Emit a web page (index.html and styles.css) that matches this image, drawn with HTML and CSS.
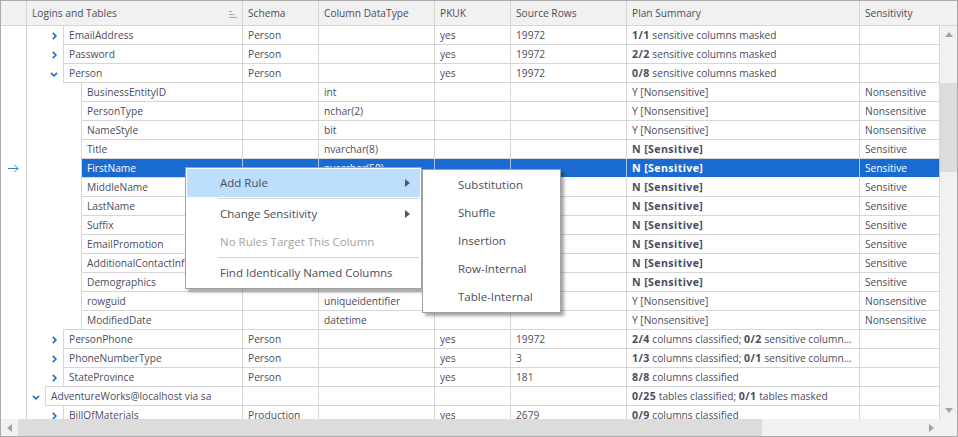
FILE: index.html
```html
<!DOCTYPE html>
<html lang="en">
<head>
<meta charset="utf-8">
<title>Logins and Tables</title>
<link rel="stylesheet" href="styles.css">
</head>
<body>
<svg class="defs" width="0" height="0" aria-hidden="true">
  <symbol id="cr" viewBox="0 0 6 9"><path d="M1 .8 4.6 4.5 1 8.2" fill="none" stroke="#1d6fd2" stroke-width="2"/></symbol>
  <symbol id="cd" viewBox="0 0 9 6"><path d="M.8 1 4.5 4.6 8.2 1" fill="none" stroke="#1d6fd2" stroke-width="2"/></symbol>
</svg>
<div class="window">
  <div class="row head">
    <div class="gutter"></div>
    <div class="cell hname">Logins and Tables
      <svg class="sort" width="8" height="7" viewBox="0 0 8 7"><path d="M0 .5h3M0 3.5h5M0 6.5h8" stroke="#a8a8a8" fill="none"/></svg>
    </div>
    <div class="cell">Schema</div><div class="cell">Column DataType</div><div class="cell">PKUK</div><div class="cell">Source Rows</div><div class="cell">Plan Summary</div><div class="cell">Sensitivity</div>
  </div>
  <div class="middle">
    <div class="rows">
      <div class="row"><div class="gutter"></div><div class="tree l1"><svg class="chev" width="5" height="8"><use href="#cr"/></svg><div class="name">EmailAddress</div></div><div class="cell">Person</div><div class="cell"></div><div class="cell">yes</div><div class="cell">19972</div><div class="cell"><b>1/1</b> sensitive columns masked</div><div class="cell"></div></div>
      <div class="row"><div class="gutter"></div><div class="tree l1"><svg class="chev" width="5" height="8"><use href="#cr"/></svg><div class="name">Password</div></div><div class="cell">Person</div><div class="cell"></div><div class="cell">yes</div><div class="cell">19972</div><div class="cell"><b>2/2</b> sensitive columns masked</div><div class="cell"></div></div>
      <div class="row"><div class="gutter"></div><div class="tree l1"><svg class="chev down" width="8" height="5"><use href="#cd"/></svg><div class="name">Person</div></div><div class="cell">Person</div><div class="cell"></div><div class="cell">yes</div><div class="cell">19972</div><div class="cell"><b>0/8</b> sensitive columns masked</div><div class="cell"></div></div>
      <div class="row"><div class="gutter"></div><div class="tree l2"><div class="name">BusinessEntityID</div></div><div class="cell"></div><div class="cell">int</div><div class="cell"></div><div class="cell"></div><div class="cell">Y [Nonsensitive]</div><div class="cell">Nonsensitive</div></div>
      <div class="row"><div class="gutter"></div><div class="tree l2"><div class="name">PersonType</div></div><div class="cell"></div><div class="cell">nchar(2)</div><div class="cell"></div><div class="cell"></div><div class="cell">Y [Nonsensitive]</div><div class="cell">Nonsensitive</div></div>
      <div class="row"><div class="gutter"></div><div class="tree l2"><div class="name">NameStyle</div></div><div class="cell"></div><div class="cell">bit</div><div class="cell"></div><div class="cell"></div><div class="cell">Y [Nonsensitive]</div><div class="cell">Nonsensitive</div></div>
      <div class="row"><div class="gutter"></div><div class="tree l2"><div class="name">Title</div></div><div class="cell"></div><div class="cell">nvarchar(8)</div><div class="cell"></div><div class="cell"></div><div class="cell"><b>N [Sensitive]</b></div><div class="cell">Sensitive</div></div>
      <div class="row selected"><div class="gutter"><svg class="focus" width="11" height="9" viewBox="0 0 11 9"><path d="M0 4.5h10M6.5 1l3.5 3.5L6.5 8" fill="none" stroke="#2f7fdc"/></svg></div><div class="tree l2"><div class="name">FirstName</div></div><div class="cell"></div><div class="cell">nvarchar(50)</div><div class="cell"></div><div class="cell"></div><div class="cell"><b>N [Sensitive]</b></div><div class="cell">Sensitive</div></div>
      <div class="row"><div class="gutter"></div><div class="tree l2"><div class="name">MiddleName</div></div><div class="cell"></div><div class="cell"></div><div class="cell"></div><div class="cell"></div><div class="cell"><b>N [Sensitive]</b></div><div class="cell">Sensitive</div></div>
      <div class="row"><div class="gutter"></div><div class="tree l2"><div class="name">LastName</div></div><div class="cell"></div><div class="cell"></div><div class="cell"></div><div class="cell"></div><div class="cell"><b>N [Sensitive]</b></div><div class="cell">Sensitive</div></div>
      <div class="row"><div class="gutter"></div><div class="tree l2"><div class="name">Suffix</div></div><div class="cell"></div><div class="cell"></div><div class="cell"></div><div class="cell"></div><div class="cell"><b>N [Sensitive]</b></div><div class="cell">Sensitive</div></div>
      <div class="row"><div class="gutter"></div><div class="tree l2"><div class="name">EmailPromotion</div></div><div class="cell"></div><div class="cell"></div><div class="cell"></div><div class="cell"></div><div class="cell"><b>N [Sensitive]</b></div><div class="cell">Sensitive</div></div>
      <div class="row"><div class="gutter"></div><div class="tree l2"><div class="name">AdditionalContactInfo</div></div><div class="cell"></div><div class="cell"></div><div class="cell"></div><div class="cell"></div><div class="cell"><b>N [Sensitive]</b></div><div class="cell">Sensitive</div></div>
      <div class="row"><div class="gutter"></div><div class="tree l2"><div class="name">Demographics</div></div><div class="cell"></div><div class="cell"></div><div class="cell"></div><div class="cell"></div><div class="cell"><b>N [Sensitive]</b></div><div class="cell">Sensitive</div></div>
      <div class="row"><div class="gutter"></div><div class="tree l2"><div class="name">rowguid</div></div><div class="cell"></div><div class="cell">uniqueidentifier</div><div class="cell"></div><div class="cell"></div><div class="cell">Y [Nonsensitive]</div><div class="cell">Nonsensitive</div></div>
      <div class="row"><div class="gutter"></div><div class="tree l2"><div class="name">ModifiedDate</div></div><div class="cell"></div><div class="cell">datetime</div><div class="cell"></div><div class="cell"></div><div class="cell">Y [Nonsensitive]</div><div class="cell">Nonsensitive</div></div>
      <div class="row"><div class="gutter"></div><div class="tree l1"><svg class="chev" width="5" height="8"><use href="#cr"/></svg><div class="name">PersonPhone</div></div><div class="cell">Person</div><div class="cell"></div><div class="cell">yes</div><div class="cell">19972</div><div class="cell"><span class="clip"><b>2/4</b> columns classified; <b>0/2</b> sensitive columns masked</span></div><div class="cell"></div></div>
      <div class="row"><div class="gutter"></div><div class="tree l1"><svg class="chev" width="5" height="8"><use href="#cr"/></svg><div class="name">PhoneNumberType</div></div><div class="cell">Person</div><div class="cell"></div><div class="cell">yes</div><div class="cell">3</div><div class="cell"><span class="clip"><b>1/3</b> columns classified; <b>0/1</b> sensitive columns masked</span></div><div class="cell"></div></div>
      <div class="row"><div class="gutter"></div><div class="tree l1"><svg class="chev" width="5" height="8"><use href="#cr"/></svg><div class="name">StateProvince</div></div><div class="cell">Person</div><div class="cell"></div><div class="cell">yes</div><div class="cell">181</div><div class="cell"><b>8/8</b> columns classified</div><div class="cell"></div></div>
      <div class="row"><div class="gutter"></div><div class="tree l0"><svg class="chev down" width="8" height="5"><use href="#cd"/></svg><div class="name">AdventureWorks@localhost via sa</div></div><div class="cell"></div><div class="cell"></div><div class="cell"></div><div class="cell"></div><div class="cell"><b>0/25</b> tables classified; <b>0/1</b> tables masked</div><div class="cell"></div></div>
      <div class="row"><div class="gutter"></div><div class="tree l1"><svg class="chev" width="5" height="8"><use href="#cr"/></svg><div class="name">BillOfMaterials</div></div><div class="cell">Production</div><div class="cell"></div><div class="cell">yes</div><div class="cell">2679</div><div class="cell"><b>0/9</b> columns classified</div><div class="cell"></div></div>
    </div>
    <div class="vscroll">
      <div class="btn"><i class="tri up"></i></div>
      <div class="vthumb"></div>
      <div class="btn"><i class="tri dn"></i></div>
    </div>
  </div>
  <div class="hscroll">
    <div class="btn"><i class="tri lf"></i></div>
    <div class="hthumb"></div>
    <div class="btn"><i class="tri rt"></i></div>
  </div>

  <div class="menu main">
    <div class="item hot">Add Rule<i class="sub"></i></div>
    <div class="sep"></div>
    <div class="item">Change Sensitivity<i class="sub"></i></div>
    <div class="item off">No Rules Target This Column</div>
    <div class="sep"></div>
    <div class="item">Find Identically Named Columns</div>
  </div>
  <div class="menu second">
    <div class="item">Substitution</div>
    <div class="item">Shuffle</div>
    <div class="item">Insertion</div>
    <div class="item">Row-Internal</div>
    <div class="item">Table-Internal</div>
  </div>
</div>
</body>
</html>
```
FILE: styles.css
```css
* { box-sizing: border-box; }
html, body { margin: 0; padding: 0; background: #fff; }
.defs { position: absolute; }
.window {
  position: relative;
  width: 958px;
  height: 437px;
  border: 1px solid #ababab;
  overflow: hidden;
  font: 10.2px/18px "Open Sans", "Noto Sans", sans-serif;
  color: #4c4c5c;
  background: #fff;
}
.row {
  display: grid;
  grid-template-columns: 26px 216px 76px 116px 76px 116px 233px 80px;
  height: 19px;
}
.head {
  height: 25px;
  grid-template-columns: 26px 216px 76px 116px 76px 116px 233px 97px;
  background: #f1f1f1;
}
.head .gutter, .head .cell { border-bottom: 1px solid #d4d4d4; border-right: 1px solid #d4d4d4; }
.head .cell { line-height: 24px; padding-left: 5px; }
.head .cell:last-child { border-right: 0; }
.hname { position: relative; }
.sort { position: absolute; right: 5px; top: 10px; }
.gutter { border-right: 1px solid #d4d4d4; display: flex; align-items: center; justify-content: center; }
.cell {
  border-right: 1px solid #d6d6d6;
  border-bottom: 1px solid #d6d6d6;
  padding-left: 5px;
  white-space: nowrap;
  overflow: hidden;
}
.clip { display: block; width: 222px; overflow: hidden; text-overflow: ellipsis; }
b { font-weight: 700; font-size: 10.6px; letter-spacing: .4px; }
.tree {
  position: relative;
  display: flex;
  align-items: stretch;
}
.l0 { padding-left: 18px; }
.l1 { padding-left: 36px; }
.l2 { padding-left: 54px; }
.chev { position: absolute; top: 6px; left: 25px; }
.chev.down { top: 8px; left: 23px; }
.l0 .chev { left: 5px; }
.name {
  flex: 1;
  min-width: 0;
  padding-left: 5px;
  border-left: 1px solid #d6d6d6;
  border-right: 1px solid #d6d6d6;
  border-bottom: 1px solid #d6d6d6;
  box-shadow: 0 -1px 0 #d6d6d6;
  white-space: nowrap;
  overflow: hidden;
}
.selected .name, .selected .cell {
  background: #1a6bd1;
  color: #fff;
  border-right-color: #a6c6ee;
  border-bottom-color: #ffffff;
}
.selected .name { border-left-color: #d6d6d6; }
.middle { display: flex; height: 393px; }
.rows { width: 939px; overflow: hidden; }
.vscroll {
  width: 17px;
  display: flex;
  flex-direction: column;
  justify-content: space-between;
  background: #f1f1f1;
}
.btn { width: 17px; height: 17px; display: flex; align-items: center; justify-content: center; flex: none; }
.vthumb { height: 89px; margin-top: 40px; margin-bottom: auto; background: #dcdcdc; }
.hscroll { display: flex; height: 17px; background: #f1f1f1; }
.hscroll .btn:last-child { margin-left: 161px; }
.hthumb { width: 744px; background: #dcdcdc; }
.tri { display: block; width: 0; height: 0; border: solid transparent; }
.tri.up { border-width: 0 4px 5px; border-bottom-color: #a3a3a3; }
.tri.dn { border-width: 5px 4px 0; border-top-color: #a3a3a3; }
.tri.lf { border-width: 4px 5px 4px 0; border-right-color: #a3a3a3; }
.tri.rt { border-width: 4px 0 4px 5px; border-left-color: #a3a3a3; }
.menu {
  position: absolute;
  background: #fff;
  border: 1px solid #a0a0a0;
  box-shadow: 3px 3px 3px rgba(0, 0, 0, .35);
  font-size: 11.5px;
}
.main { left: 184px; top: 166px; width: 237px; height: 122px; padding: 1px; }
.second { left: 421px; top: 168px; width: 139px; height: 144px; padding: 1px; }
.item { position: relative; height: 28px; line-height: 27px; color: #4c4c56; white-space: nowrap; }
.main .item { padding-left: 33px; }
.second .item { padding-left: 34px; }
.hot { background: #bddffd; }
.off { color: #a2a2a2; }
.sep { height: 1px; margin: 1px 1px 1px 31px; background: #d4d4d4; }
.sub {
  position: absolute;
  right: 10px;
  top: 10px;
  width: 0;
  height: 0;
  border: solid transparent;
  border-width: 4px 0 4px 5px;
  border-left-color: #555;
}
```
